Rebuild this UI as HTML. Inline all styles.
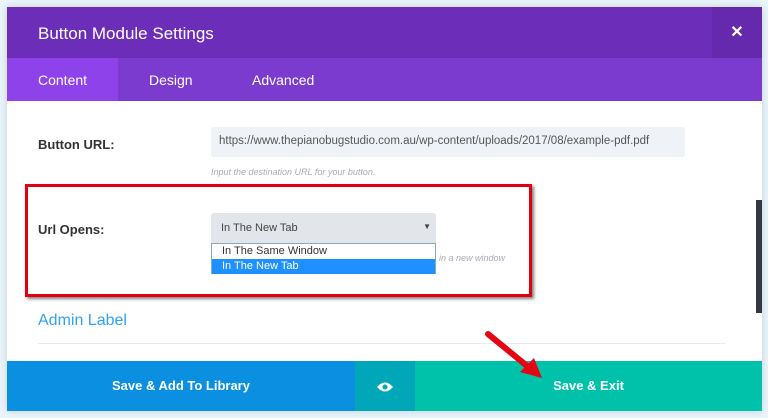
<!DOCTYPE html>
<html><head><meta charset="utf-8"><style>
*{margin:0;padding:0;box-sizing:border-box}
body{width:768px;height:418px;overflow:hidden;background:#e9f5fb;font-family:"Liberation Sans",sans-serif;position:relative}
.m{position:absolute;left:7px;top:7px;width:755px;height:404px;background:#fff;box-shadow:0 0 8px rgba(0,0,0,.15)}
.hd{position:absolute;left:0;top:0;width:755px;height:51px;background:#6c2eb9;color:#fff;font-size:17px}
.hd span{position:absolute;left:31px;top:17px}
.x{position:absolute;right:0;top:0;width:50px;height:51px;background:#6429ad;color:#fff;font-size:16px;font-weight:bold;text-align:center;line-height:51px}
.tb{position:absolute;left:0;top:51px;width:755px;height:43px;background:#7c3bcf;color:#fff;font-size:14px}
.tb .t{position:absolute;top:14px}
.tb .act{position:absolute;left:0;top:0;width:111px;height:43px;background:#8e43ea}
.lbl{position:absolute;font-size:13px;font-weight:bold;color:#333}
.in{position:absolute;left:204px;top:120px;width:474px;height:30px;background:#eff3f7;border-radius:3px;font-size:11.5px;color:#555;padding:8px 8px}
.hint{position:absolute;font-size:9px;font-style:italic;color:#aab}
.red{position:absolute;left:18px;top:177px;width:507px;height:113px;border:3px solid #e2000f;box-shadow:2px 2px 3px rgba(0,0,0,.5)}
.sel{position:absolute;left:204px;top:206px;width:225px;height:30px;background:#e2e5e9;border-radius:3px 3px 0 0;font-size:11px;color:#444;padding:9px 10px}
.sel b{position:absolute;right:5px;top:9px;font-size:8px}
.dd{position:absolute;left:204px;top:236px;width:225px;height:31px;border:1px solid #8ab;background:#fff;font-size:11px;color:#333}
.dd div{height:15px;padding:1px 10px}
.dd .s{background:#1e90ff;color:#fff}
.adm{position:absolute;left:31px;top:305px;font-size:16px;color:#2ea3f2}
.ln{position:absolute;left:31px;top:336px;width:688px;height:1px;background:#e6ebef}
.sb{position:absolute;left:749px;top:193px;width:6px;height:113px;background:#33393f}
.ft{position:absolute;left:0;top:354px;height:50px;color:#fff;font-size:13px;font-weight:bold;text-align:center;line-height:50px}
</style></head><body>
<div class="m">
<div class="hd"><span>Button Module Settings</span><div class="x">✕</div></div>
<div class="tb"><div class="act"></div><div class="t" style="left:31px">Content</div><div class="t" style="left:142px">Design</div><div class="t" style="left:245px">Advanced</div></div>
<div class="lbl" style="left:31px;top:130px">Button URL:</div>
<div class="in">https://www.thepianobugstudio.com.au/wp-content/uploads/2017/08/example-pdf.pdf</div>
<div class="hint" style="left:204px;top:160px">Input the destination URL for your button.</div>
<div class="red"></div>
<div class="lbl" style="left:31px;top:215px">Url Opens:</div>
<div class="sel">In The New Tab<b>▼</b></div>
<div class="dd"><div>In The Same Window</div><div class="s">In The New Tab</div></div>
<div class="hint" style="left:432px;top:246px">in a new window</div>
<div class="adm">Admin Label</div>
<div class="ln"></div>
<div class="sb"></div>
<div class="ft" style="left:0;width:348px;background:#0b8fe0">Save &amp; Add To Library</div>
<div class="ft" style="left:348px;width:60px;background:#00a7b8"><svg width="18" height="12" viewBox="0 0 18 12" style="vertical-align:middle"><path d="M1 6Q9-3 17 6Q9 15 1 6Z" fill="#fff"/><circle cx="9" cy="6" r="2.5" fill="#00a7b8"/></svg></div>
<div class="ft" style="left:408px;width:347px;background:#00c2aa">Save &amp; Exit</div>
</div>
<svg style="position:absolute;left:480px;top:328px" width="70" height="56"><line x1="8" y1="6" x2="52" y2="42" stroke="#e30613" stroke-width="6" stroke-linecap="round"/><polygon points="62,50 40,44 54,30" fill="#e30613"/></svg>
</body></html>
